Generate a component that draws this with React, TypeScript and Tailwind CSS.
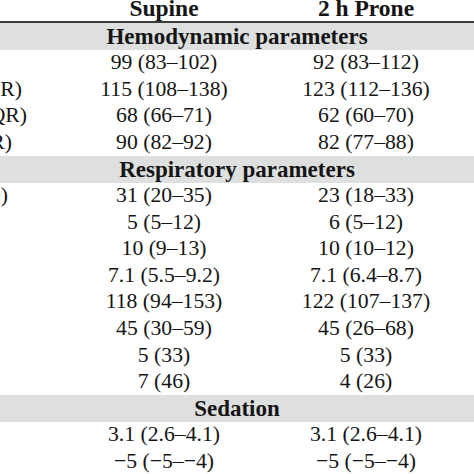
import React from "react";

type Row =
  | { kind: "band"; title: string }
  | { kind: "data"; label: string; pr: number; a: string; b: string };

const rows: Row[] = [
  { kind: "band", title: "Hemodynamic parameters" },
  { kind: "data", label: "Heart rate, bpm", pr: 200, a: "99 (83–102)", b: "92 (83–112)" },
  { kind: "data", label: "Systolic BP, mmHg, median (IQR)", pr: 41, a: "115 (108–138)", b: "123 (112–136)" },
  { kind: "data", label: "Diastolic BP, mmHg, median (IQR)", pr: 36, a: "68 (66–71)", b: "62 (60–70)" },
  { kind: "data", label: "MAP, mmHg, median (IQR)", pr: 51, a: "90 (82–92)", b: "82 (77–88)" },
  { kind: "band", title: "Respiratory parameters" },
  { kind: "data", label: "Compliance (mL/cmH2O)", pr: 55, a: "31 (20–35)", b: "23 (18–33)" },
  { kind: "data", label: "PEEP", pr: 200, a: "5 (5–12)", b: "6 (5–12)" },
  { kind: "data", label: "Plateau", pr: 200, a: "10 (9–13)", b: "10 (10–12)" },
  { kind: "data", label: "Vt", pr: 200, a: "7.1 (5.5–9.2)", b: "7.1 (6.4–8.7)" },
  { kind: "data", label: "PaO2/FiO2", pr: 200, a: "118 (94–153)", b: "122 (107–137)" },
  { kind: "data", label: "PaCO2", pr: 200, a: "45 (30–59)", b: "45 (26–68)" },
  { kind: "data", label: "NMB", pr: 200, a: "5 (33)", b: "5 (33)" },
  { kind: "data", label: "iNO", pr: 200, a: "7 (46)", b: "4 (26)" },
  { kind: "band", title: "Sedation" },
  { kind: "data", label: "Dose", pr: 200, a: "3.1 (2.6–4.1)", b: "3.1 (2.6–4.1)" },
  { kind: "data", label: "RASS", pr: 200, a: "−5 (−5–−4)", b: "−5 (−5–−4)" },
];

export default function App() {
  return (
    <div
      className="w-[474px] h-[474px] overflow-hidden bg-white text-[#151515]"
      style={{ fontFamily: '"Liberation Serif", "Times New Roman", serif' }}
    >
      <div className="-mt-[4px]">
        <div className="grid grid-cols-[63px_202px_202px_7px] h-[27px] items-center border-b-2 border-[#3a3a3a] font-bold text-[23.5px] leading-none">
          <div />
          <div className="text-center">Supine</div>
          <div className="text-center">2 h Prone</div>
          <div />
        </div>
        {rows.map((r, i) =>
          r.kind === "band" ? (
            <div
              key={i}
              className="h-[26.6px] bg-[#dde0df] flex items-center justify-center font-bold text-[23px] leading-none"
            >
              {r.title}
            </div>
          ) : (
            <div
              key={i}
              className="grid grid-cols-[63px_202px_202px_7px] h-[26.6px] items-center text-[21.7px] leading-none"
            >
              <div className="flex justify-end whitespace-nowrap" style={{ paddingRight: r.pr }}>
                <span>{r.label}</span>
              </div>
              <div className="text-center whitespace-nowrap">{r.a}</div>
              <div className="text-center whitespace-nowrap">{r.b}</div>
              <div />
            </div>
          )
        )}
      </div>
    </div>
  );
}
